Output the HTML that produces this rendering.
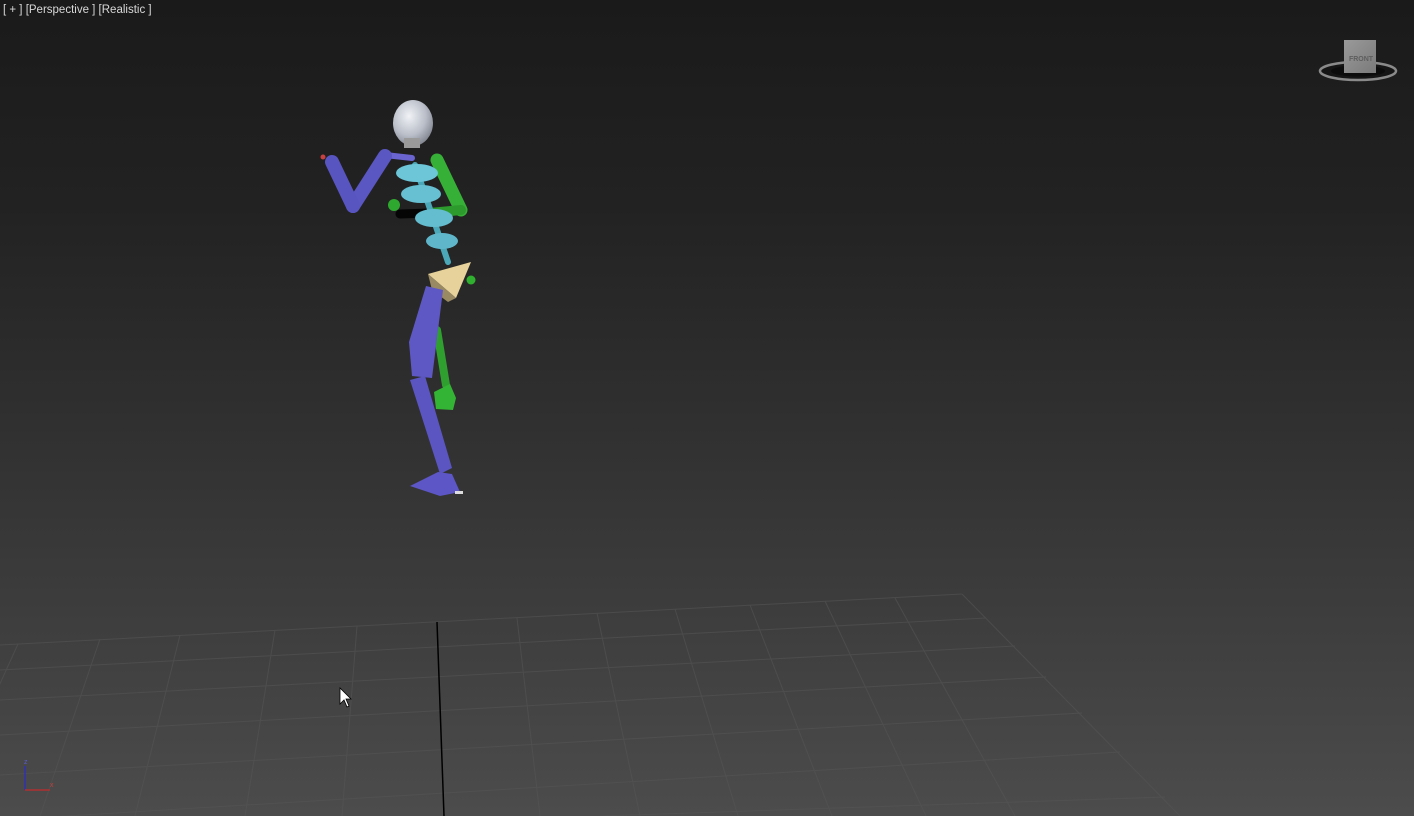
<!DOCTYPE html>
<html><head><meta charset="utf-8"><style>
html,body{margin:0;padding:0;width:1414px;height:816px;overflow:hidden;}
body{background:linear-gradient(to bottom,#1a1a1a 0%,#222 25%,#2f2f2f 50%,#3d3d3d 75%,#4c4c4c 100%);font-family:"Liberation Sans",sans-serif;position:relative;}
.lbl{position:absolute;left:3px;top:4px;color:#d8d8d8;font-size:11.5px;white-space:pre;}
svg{position:absolute;left:0;top:0;}
</style></head><body>
<svg width="1414" height="816" viewBox="0 0 1414 816">
<defs>
<radialGradient id="hd" cx="0.4" cy="0.35" r="0.7"><stop offset="0" stop-color="#f0f2f6"/><stop offset="0.6" stop-color="#b9bec8"/><stop offset="1" stop-color="#7d828c"/></radialGradient>
<linearGradient id="cube" x1="0" y1="0" x2="1" y2="1"><stop offset="0" stop-color="#9a9a9a"/><stop offset="1" stop-color="#7a7a7a"/></linearGradient>
</defs>
<g stroke="#555" stroke-width="1" fill="none" opacity="0.6">
<line x1="0" y1="645" x2="962" y2="594"/>
<line x1="0" y1="670" x2="986" y2="618"/>
<line x1="0" y1="700" x2="1015" y2="646"/>
<line x1="0" y1="735" x2="1046" y2="677"/>
<line x1="0" y1="775" x2="1082" y2="713"/>
<line x1="0" y1="820" x2="1120" y2="752"/>
<line x1="600" y1="816" x2="1165" y2="797"/>
<line x1="18" y1="644" x2="-60" y2="816"/>
<line x1="100" y1="639" x2="40" y2="816"/>
<line x1="180" y1="635" x2="135" y2="816"/>
<line x1="275" y1="630" x2="245" y2="816"/>
<line x1="357" y1="626" x2="342" y2="816"/>
<line x1="517" y1="618" x2="540" y2="816"/>
<line x1="597" y1="613" x2="640" y2="816"/>
<line x1="675" y1="609" x2="738" y2="816"/>
<line x1="750" y1="605" x2="832" y2="816"/>
<line x1="825" y1="601" x2="926" y2="816"/>
<line x1="895" y1="598" x2="1015" y2="816"/>
<line x1="962" y1="594" x2="1180" y2="816"/>
</g>
<line x1="437" y1="622" x2="444" y2="816" stroke="#000" stroke-width="1.5"/>
<g stroke-linejoin="round" stroke-linecap="round">
<line x1="437" y1="330" x2="446" y2="385" stroke="#2fa02f" stroke-width="8"/>
<polygon points="434,392 450,384 456,398 453,410 436,409" fill="#34b434"/>
<line x1="437" y1="160" x2="461" y2="210" stroke="#36b036" stroke-width="13"/>
<line x1="461" y1="210" x2="430" y2="213" stroke="#2c9a2c" stroke-width="10"/>
<line x1="430" y1="213" x2="400" y2="214" stroke="#050505" stroke-width="9"/>
<circle cx="394" cy="205" r="6" fill="#2fa82f"/>
<line x1="412" y1="158" x2="385" y2="155" stroke="#6a64d0" stroke-width="6"/>
<line x1="385" y1="156" x2="353" y2="206" stroke="#5a56c2" stroke-width="14"/>
<line x1="353" y1="206" x2="332" y2="162" stroke="#5854c0" stroke-width="14"/>
<circle cx="323" cy="157" r="2.5" fill="#c84040"/>
<line x1="415" y1="165" x2="448" y2="262" stroke="#4aa8b8" stroke-width="6"/>
<ellipse cx="417" cy="173" rx="21" ry="9" fill="#6cc6d8"/>
<ellipse cx="421" cy="194" rx="20" ry="9" fill="#66c0d2"/>
<ellipse cx="434" cy="218" rx="19" ry="9" fill="#64bccf"/>
<ellipse cx="442" cy="241" rx="16" ry="8" fill="#5fb6ca"/>
<polygon points="428,274 471,262 456,298" fill="#e6d29a"/>
<polygon points="428,274 456,298 448,302 432,290" fill="#9a8a64"/>
<circle cx="471" cy="280" r="4.5" fill="#2fb02f"/>
<polygon points="426,286 443,290 432,378 412,376 409,342" fill="#5e58c4"/>
<polygon points="410,380 425,376 452,468 440,474" fill="#5a55c0"/>
<polygon points="410,486 438,472 452,474 460,492 440,496" fill="#5c56c6"/>
<rect x="455" y="491" width="8" height="3" fill="#ddd"/>
<ellipse cx="413" cy="123" rx="20" ry="23" fill="url(#hd)"/>
<rect x="404" y="138" width="16" height="10" fill="#9a9a9a"/>
</g>
<ellipse cx="1358" cy="71" rx="38" ry="9" fill="#151515" stroke="#8a8a8a" stroke-width="2.5"/>
<ellipse cx="1358" cy="71" rx="27" ry="5.5" fill="#0c0c0c"/>
<rect x="1344" y="40" width="32" height="33" fill="url(#cube)"/>
<text x="1361" y="61" font-size="7" fill="#5e5e5e" text-anchor="middle" font-family="Liberation Sans" font-weight="bold">FRONT</text>
<line x1="25" y1="766" x2="25" y2="790" stroke="#3030b0" stroke-width="1.5"/>
<line x1="25" y1="790" x2="50" y2="790" stroke="#b03030" stroke-width="1.5"/>
<text x="24" y="764" font-size="7" fill="#5a5ad0" font-family="Liberation Sans">z</text>
<text x="50" y="787" font-size="7" fill="#c04040" font-family="Liberation Sans">x</text>
<polygon points="340,688 340,704 344,700 347,707 349,706 346,699 351,699" fill="#fff" stroke="#000" stroke-width="0.8"/>
</svg>
<div class="lbl">[ + ] [Perspective ] [Realistic ]</div>
</body></html>
